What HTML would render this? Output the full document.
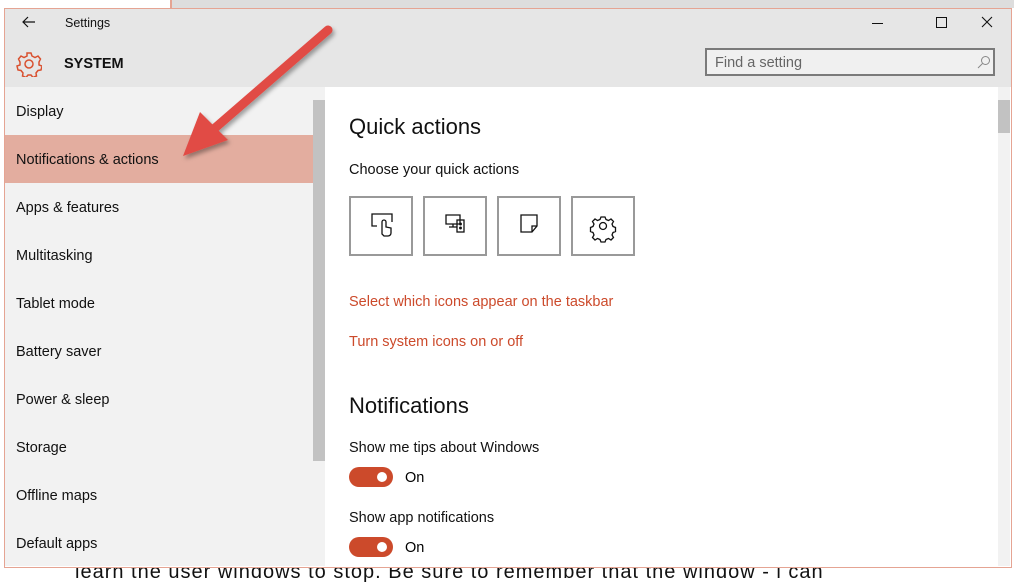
<!DOCTYPE html>
<html><head><style>
body{margin:0;width:1014px;height:573px;overflow:hidden;background:#fff;font-family:"Liberation Sans",sans-serif;position:relative}
.a{position:absolute}
.side .t{position:absolute;left:11px;font-size:14.5px;color:#111}
.qa{position:absolute;top:196px;width:64px;height:60px;border:2px solid #999;box-sizing:border-box}
.tg{position:absolute;left:349px;width:44px;height:20px;border-radius:10px;background:#cc4a2b}
.tg:after{content:"";position:absolute;right:6px;top:5px;width:10px;height:10px;border-radius:5px;background:#fff}
.lk{position:absolute;left:349px;font-size:14.5px;color:#cc4a2b}
</style></head><body>
<div class="a" style="left:75px;top:561px;font-size:20px;color:#111;white-space:nowrap;letter-spacing:1px">learn the user windows to stop. Be sure to remember that the window - l can</div>
<div class="a" style="left:0;top:0;width:170px;height:8px;background:#fff"></div>
<div class="a" style="left:170px;top:0;width:844px;height:8px;background:#ddd;border-left:2px solid #e5a493"></div>
<div class="a" style="left:4px;top:8px;width:1006px;height:558px;border:1px solid #e5a493;background:#fff"></div>
<div class="a" style="left:5px;top:9px;width:1006px;height:78px;background:#e6e6e6"></div>
<svg class="a" style="left:22px;top:16px" width="14" height="12"><path d="M13 6H1M6 1L1 6l5 5" fill="none" stroke="#111" stroke-width="1.2"/></svg>
<div class="a" style="left:65px;top:16px;font-size:12.5px;color:#111">Settings</div>
<div class="a" style="left:872px;top:23px;width:11px;height:1px;background:#111"></div>
<div class="a" style="left:936px;top:17px;width:9px;height:9px;border:1px solid #111"></div>
<svg class="a" style="left:981px;top:16px" width="12" height="12"><path d="M1 1l10 10M11 1L1 11" stroke="#111" stroke-width="1.1"/></svg>
<svg class="a" style="left:16px;top:51px" width="26" height="26" viewBox="0 0 26 26"><g fill="none" stroke="#d9502f" stroke-width="1.5"><circle cx="13" cy="13" r="4"/><path d="M11 2h4l1 3 3 1.5 3-1.5 2.5 3-1.5 3 0 3 3 1-1 4-3 .5-2 2.5 .5 3-3.5 1.5-2-2.5h-3l-2 2.5-3.5-1.5.5-3-2-2.5-3-.5-1-4 3-1 0-3-1.5-3 2.5-3 3 1.5 3-1.5z"/></g></svg>
<div class="a" style="left:64px;top:56px;font-size:14.5px;font-weight:bold;color:#111">SYSTEM</div>
<div class="a" style="left:705px;top:48px;width:290px;height:28px;box-sizing:border-box;border:2px solid #7a7a7a;background:#f0f0f0"></div>
<div class="a" style="left:715px;top:55px;font-size:14.5px;color:#666">Find a setting</div>
<svg class="a" style="left:977px;top:55px" width="14" height="14"><circle cx="8.5" cy="5.5" r="4" fill="none" stroke="#888"/><path d="M5.5 8.5L1 13" stroke="#888"/></svg>
<div class="a side" style="left:5px;top:87px;width:308px;height:479px;background:#f2f2f2">
<div class="a" style="left:0;top:48px;width:308px;height:48px;background:#e3ad9f"></div>
<div class="t" style="top:17px">Display</div><div class="t" style="top:65px">Notifications &amp; actions</div><div class="t" style="top:113px">Apps &amp; features</div><div class="t" style="top:161px">Multitasking</div><div class="t" style="top:209px">Tablet mode</div><div class="t" style="top:257px">Battery saver</div><div class="t" style="top:305px">Power &amp; sleep</div><div class="t" style="top:353px">Storage</div><div class="t" style="top:401px">Offline maps</div><div class="t" style="top:449px">Default apps</div>
</div>
<div class="a" style="left:313px;top:87px;width:12px;height:479px;background:#f2f2f2"></div>
<div class="a" style="left:313px;top:100px;width:12px;height:361px;background:#c2c2c2"></div>
<div class="a" style="left:998px;top:87px;width:12px;height:479px;background:#f2f2f2"></div>
<div class="a" style="left:998px;top:100px;width:12px;height:33px;background:#c2c2c2"></div>
<div class="a" style="left:349px;top:114px;font-size:22px;color:#111">Quick actions</div>
<div class="a" style="left:349px;top:162px;font-size:14.5px;color:#111">Choose your quick actions</div>
<div class="qa" style="left:349px"><svg width="60" height="56"><g fill="none" stroke="#111" stroke-width="1.3"><path d="M26 28h-5v-12h20v8"/><path d="M31 36v-12a2 2 0 014 0v5l5 1v5a3 3 0 01-3 3h-4z"/></g></svg></div>
<div class="qa" style="left:423px"><svg width="60" height="56"><g fill="none" stroke="#111" stroke-width="1.3"><path d="M21 17h14v9h-14zM28 26v3M24 29h8"/><rect x="32" y="22" width="7" height="12"/><circle cx="35.5" cy="26" r=".8" fill="#111"/><circle cx="35.5" cy="30" r=".8" fill="#111"/></g></svg></div>
<div class="qa" style="left:497px"><svg width="60" height="56"><path d="M22 17h16v11l-5 6h-11zM33 34v-6h5" fill="none" stroke="#111" stroke-width="1.3"/></svg></div>
<div class="qa" style="left:571px"><svg width="60" height="56" viewBox="-17 -15 60 56"><g fill="none" stroke="#111" stroke-width="1.3"><circle cx="13" cy="13" r="3.5"/><path d="M11 4h4l1 2.5 2.5 1 2.5-1.5 2.5 2.5-1.5 2.5 1 2.5 2.5 1v4l-2.5 1-1 2.5 1.5 2.5-2.5 2.5-2.5-1.5-2.5 1-1 2.5h-4l-1-2.5-2.5-1-2.5 1.5-2.5-2.5 1.5-2.5-1-2.5-2.5-1v-4l2.5-1 1-2.5-1.5-2.5 2.5-2.5 2.5 1.5 2.5-1z"/></g></svg></div>
<div class="lk" style="top:294px">Select which icons appear on the taskbar</div>
<div class="lk" style="top:334px">Turn system icons on or off</div>
<div class="a" style="left:349px;top:393px;font-size:22px;color:#111">Notifications</div>
<div class="a" style="left:349px;top:440px;font-size:14.5px;color:#111">Show me tips about Windows</div>
<div class="tg" style="top:467px"></div><div class="a" style="left:405px;top:470px;font-size:14.5px">On</div>
<div class="a" style="left:349px;top:510px;font-size:14.5px;color:#111">Show app notifications</div>
<div class="tg" style="top:537px"></div><div class="a" style="left:405px;top:540px;font-size:14.5px">On</div>
<svg class="a" style="left:0;top:0" width="1014" height="573"><defs><filter id="s"><feDropShadow dx="2" dy="3" stdDeviation="2" flood-opacity=".35"/></filter></defs><g filter="url(#s)" fill="#e14b44"><path d="M328 30L215 128" stroke="#e14b44" stroke-width="9" stroke-linecap="round"/><polygon points="183,156 200,112 228,140"/></g></svg>
</body></html>
